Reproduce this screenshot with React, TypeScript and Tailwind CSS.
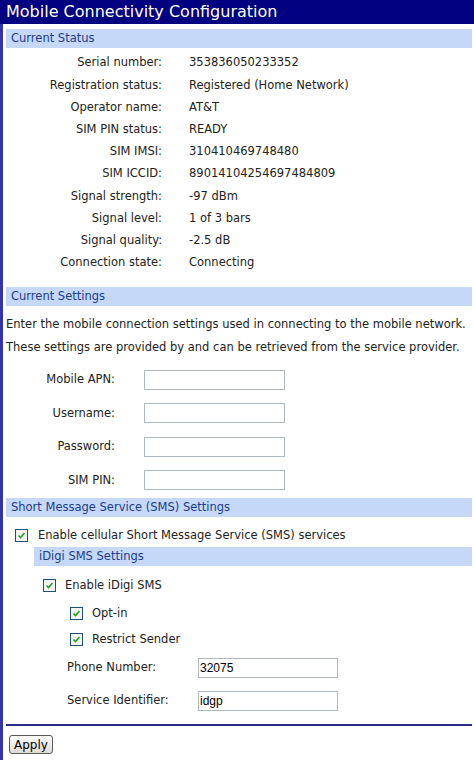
const STATUS = [
  ["Serial number:", "353836050233352"],
  ["Registration status:", "Registered (Home Network)"],
  ["Operator name:", "AT&T"],
  ["SIM PIN status:", "READY"],
  ["SIM IMSI:", "310410469748480"],
  ["SIM ICCID:", "89014104254697484809"],
  ["Signal strength:", "-97 dBm"],
  ["Signal level:", "1 of 3 bars"],
  ["Signal quality:", "-2.5 dB"],
  ["Connection state:", "Connecting"],
]

const SETTINGS = ["Mobile APN:", "Username:", "Password:", "SIM PIN:"]

function SectionHeader({ title, className = "" }: { title: string; className?: string }) {
  return (
    <div className={`h-[19px] shrink-0 bg-[#c5d8f8] pl-[5px] flex items-center text-[#1c3c8c] ${className}`}>
      {title}
    </div>
  )
}

function Check() {
  return (
    <span className="w-[13px] h-[13px] border border-[#1c5180] bg-[#f4f4f0] flex items-center justify-center shrink-0">
      <svg width="9" height="9" viewBox="0 0 9 9">
        <path d="M1.5 4.5 L3.5 6.5 L7.5 2" fill="none" stroke="#21a121" strokeWidth="1.6" />
      </svg>
    </span>
  )
}

function TextBox({ value = "", className = "" }: { value?: string; className?: string }) {
  return (
    <input
      readOnly
      value={value}
      className={`block h-[20px] border border-[#b0b8c4] bg-white px-[1px] outline-none text-[12px] text-black font-['Liberation_Sans',sans-serif] ${className}`}
    />
  )
}

export default function App() {
  return (
    <div className="w-[474px] h-[760px] bg-white overflow-hidden flex flex-col text-[11.5px] text-[#222] font-['DejaVu_Sans',sans-serif]">
      <div className="h-[24px] shrink-0 bg-[#000080] text-white text-[16px] pl-[6px] flex items-center">
        Mobile Connectivity Configuration
      </div>
      <div className="flex-1 border-l-[3px] border-[#3434a8] pl-[3px] pr-[2px] pt-[5px] flex flex-col">
        <SectionHeader title="Current Status" />

        <div className="pt-[4px] flex flex-col">
          {STATUS.map(([label, value]) => (
            <div key={label} className="h-[22.2px] flex items-center">
              <span className="w-[156px] text-right">{label}</span>
              <span className="pl-[27px]">{value}</span>
            </div>
          ))}
        </div>

        <SectionHeader title="Current Settings" className="mt-[13px]" />
        <div className="pt-[7px] flex flex-col">
          <div className="h-[23px] flex items-center whitespace-nowrap">Enter the mobile connection settings used in connecting to the mobile network.</div>
          <div className="h-[23px] flex items-center whitespace-nowrap">These settings are provided by and can be retrieved from the service provider.</div>
        </div>
        <div className="pt-[11px] flex flex-col gap-[13.5px]">
          {SETTINGS.map((label) => (
            <div key={label} className="h-[20px] flex items-center">
              <span className="w-[109px] text-right">{label}</span>
              <TextBox className="ml-[29px] w-[141px]" />
            </div>
          ))}
        </div>

        <SectionHeader title="Short Message Service (SMS) Settings" className="mt-[8px]" />
        <div className="h-[30px] pt-[6px] flex items-center gap-[10px] pl-[9px]">
          <Check />
          <span>Enable cellular Short Message Service (SMS) services</span>
        </div>
        <SectionHeader title="iDigi SMS Settings" className="ml-[28px]" />
        <div className="flex flex-col pl-[37px] pt-[6px]">
          <div className="h-[26px] flex items-center gap-[9px]">
            <Check />
            <span>Enable iDigi SMS</span>
          </div>
          <div className="pl-[27px] flex flex-col">
            <div className="h-[28px] pt-[2px] flex items-center gap-[9px]">
              <Check />
              <span>Opt-in</span>
            </div>
            <div className="h-[27px] flex items-center gap-[9px]">
              <Check />
              <span>Restrict Sender</span>
            </div>
          </div>
        </div>
        <div className="pl-[61px] pt-[5px] flex flex-col gap-[14px]">
          <div className="h-[19px] flex items-center">
            <span className="w-[131px]">Phone Number:</span>
            <TextBox value="32075" className="w-[140px] h-[19px]" />
          </div>
          <div className="h-[19px] flex items-center">
            <span className="w-[131px]">Service Identifier:</span>
            <TextBox value="idgp" className="w-[140px] h-[19px]" />
          </div>
        </div>
        <div className="mt-[14px] h-[2px] shrink-0 bg-[#2a2a8a]" />
        <div className="pt-[9px] pl-[3px]">
          <button className="h-[19px] px-[4px] border border-[#5a5a5a] rounded-[3px] bg-gradient-to-b from-[#fdfdfd] to-[#dcdcd4] text-[12px] text-black leading-none">
            Apply
          </button>
        </div>
      </div>
    </div>
  )
}
